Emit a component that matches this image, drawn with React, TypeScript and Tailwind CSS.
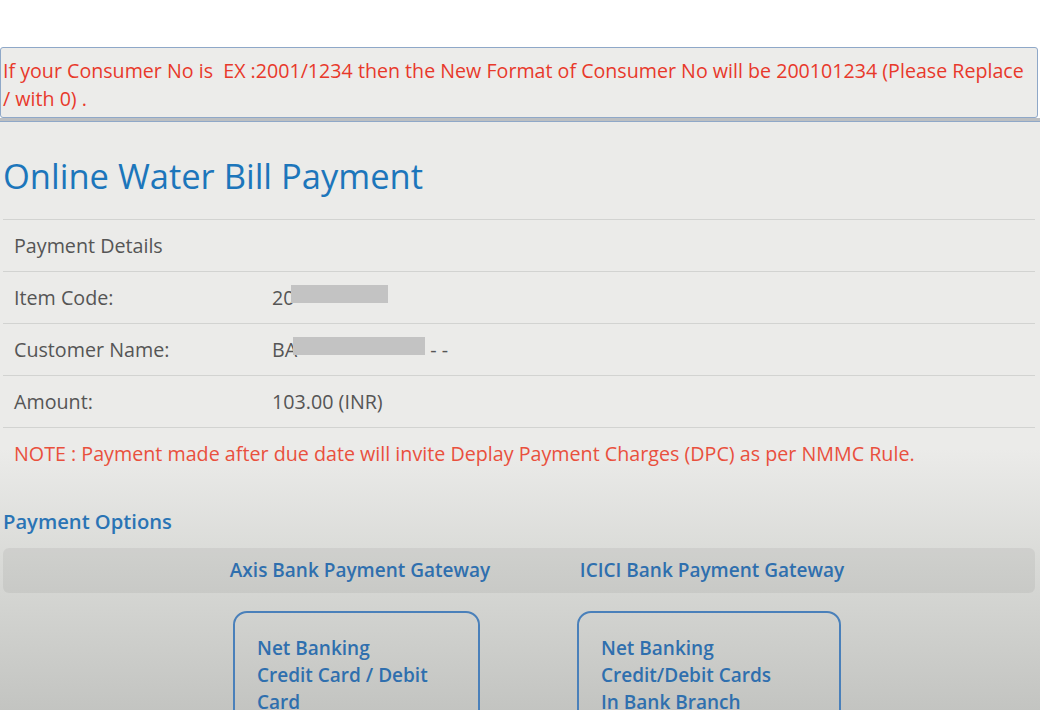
import React from "react";

const rows = [
  { label: "Item Code:", value: "20", mask: "w-[97px]" },
  { label: "Customer Name:", value: "BA", mask: "w-[132px]", tail: " - -" },
  { label: "Amount:", value: "103.00 (INR)" },
];

export default function App() {
  return (
    <div className="flex h-[710px] w-[1040px] flex-col overflow-hidden bg-white font-['Open_Sans',sans-serif]">
      <div className="h-[47px] shrink-0" />

      {/* Consumer number notice */}
      <div className="mr-[2px] rounded-[3px] border border-[#8fa8c8] bg-[#ececea] px-[2px] pb-[4px] pt-[9px] text-[19.65px] leading-[28px] text-[#e8392b]">
        If your Consumer No is&nbsp; EX :2001/1234 then the New Format of Consumer No will be 200101234 (Please Replace / with 0) .
      </div>
      <div className="h-[3px] shrink-0 bg-[#bcbfc2]" />

      {/* Main panel */}
      <div className="flex-1 border-t border-[#8fa8c8] bg-[linear-gradient(to_bottom,#ebebe9_0%,#ebebe9_52%,#d9dad7_70%,#bdbebb_100%)] pl-[3px] pr-[5px]">
        <h1 className="pt-[34px] text-[34.5px] leading-[40px] text-[#1c76bb]">Online Water Bill Payment</h1>

        <div className="mt-[23px] border-t border-[#d2d3d1]">
          <div className="flex h-[52px] items-center border-b border-[#d2d3d1] px-[11px] text-[19.7px] text-[#555]">
            Payment Details
          </div>
          {rows.map((r) => (
            <div key={r.label} className="grid h-[52px] grid-cols-[258px_1fr] items-center border-b border-[#d2d3d1] px-[11px] text-[19.7px] text-[#555]">
              <span>{r.label}</span>
              <span className="flex items-center">
                {r.value}
                {r.mask && <span className={`${r.mask} -ml-[4px] -mt-[6px] h-[18px] bg-[#c3c3c3]`} />}
                {r.tail && <span className="whitespace-pre">{r.tail}</span>}
              </span>
            </div>
          ))}
          <div className="flex h-[52px] items-center px-[11px] text-[19.7px] text-[#e9503d]">
            NOTE : Payment made after due date will invite Deplay Payment Charges (DPC) as per NMMC Rule.
          </div>
        </div>

        <h2 className="mt-[27px] text-[20.2px] font-semibold leading-[28px] text-[#2a74b5]">Payment Options</h2>

        <div className="mt-[13px] grid h-[45px] grid-cols-[181px_352px_352px_1fr] items-center rounded-[6px] bg-black/[0.055] text-[19px] font-semibold text-[#2f6fae]">
          <span />
          <span className="text-center">Axis Bank Payment Gateway</span>
          <span className="text-center">ICICI Bank Payment Gateway</span>
          <span />
        </div>

        <div className="mt-[18px] grid grid-cols-[181px_352px_352px_1fr] text-[19px] font-semibold leading-[27px] text-[#2f6fae]">
          <span />
          <div className="ml-[49px] h-[140px] w-[247px] rounded-[14px] border-2 border-[#4a80ba] px-[22px] pt-[22px]">
            Net Banking
            <br />
            Credit Card / Debit Card
          </div>
          <div className="ml-[41px] h-[140px] w-[264px] rounded-[14px] border-2 border-[#4a80ba] px-[22px] pt-[22px]">
            Net Banking
            <br />
            Credit/Debit Cards
            <br />
            In Bank Branch
          </div>
          <span />
        </div>
      </div>
    </div>
  );
}
